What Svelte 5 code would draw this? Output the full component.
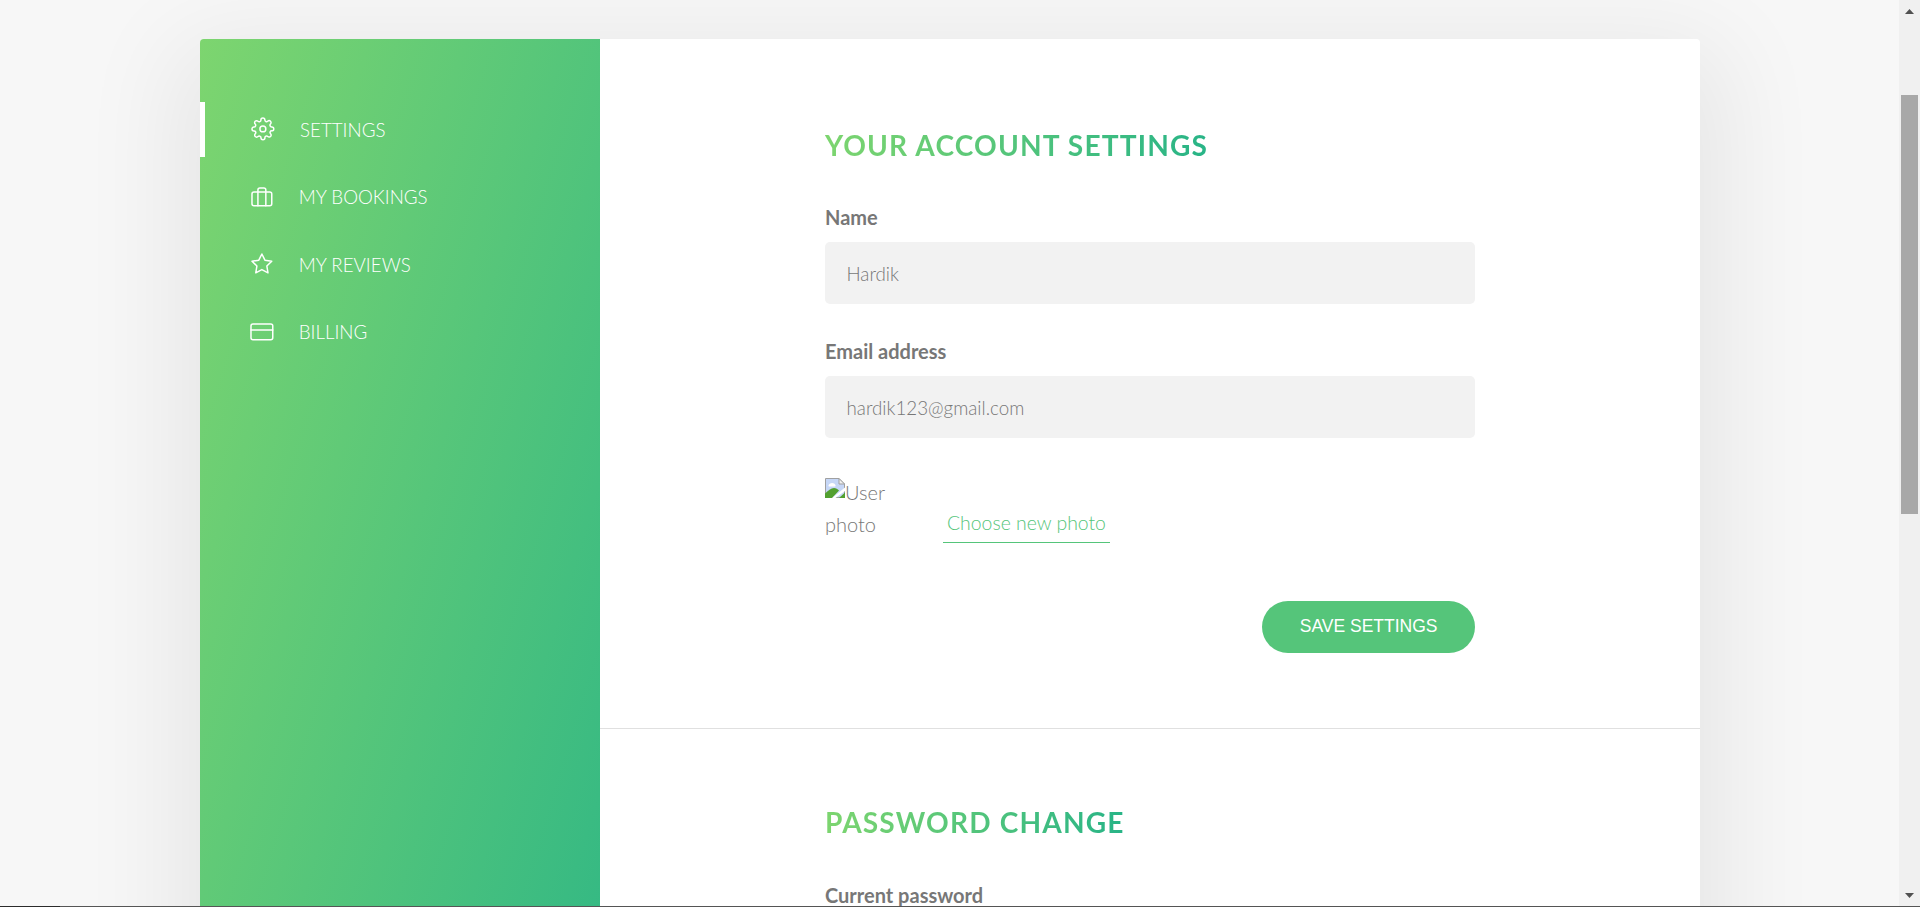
<script>
  const navItems = [
    { label: 'Settings', icon: 'settings', active: true },
    { label: 'My bookings', icon: 'briefcase' },
    { label: 'My reviews', icon: 'star' },
    { label: 'Billing', icon: 'card' },
  ]
</script>

<div class="Page">
  <main class="UserView">
    <nav class="Menu">
      <ul class="SideNav">
        {#each navItems as item}
          <li class:active={item.active}>
            <a href="#nav">
              <svg class="NavIcon" viewBox="0 0 24 24">
                {#if item.icon === 'settings'}
                  <circle cx="12" cy="12" r="3" />
                  <path d="M19.4 15a1.65 1.65 0 0 0 .33 1.82l.06.06a2 2 0 0 1 0 2.83 2 2 0 0 1-2.83 0l-.06-.06a1.65 1.65 0 0 0-1.82-.33 1.65 1.65 0 0 0-1 1.51V21a2 2 0 0 1-2 2 2 2 0 0 1-2-2v-.09A1.65 1.65 0 0 0 9 19.4a1.65 1.65 0 0 0-1.82.33l-.06.06a2 2 0 0 1-2.83 0 2 2 0 0 1 0-2.83l.06-.06a1.65 1.65 0 0 0 .33-1.82 1.65 1.65 0 0 0-1.51-1H3a2 2 0 0 1-2-2 2 2 0 0 1 2-2h.09A1.65 1.65 0 0 0 4.6 9a1.65 1.65 0 0 0-.33-1.82l-.06-.06a2 2 0 0 1 0-2.83 2 2 0 0 1 2.83 0l.06.06a1.65 1.65 0 0 0 1.82.33H9a1.65 1.65 0 0 0 1-1.51V3a2 2 0 0 1 2-2 2 2 0 0 1 2 2v.09a1.65 1.65 0 0 0 1 1.51 1.65 1.65 0 0 0 1.82-.33l.06-.06a2 2 0 0 1 2.83 0 2 2 0 0 1 0 2.83l-.06.06a1.65 1.65 0 0 0-.33 1.82V9a1.65 1.65 0 0 0 1.51 1H21a2 2 0 0 1 2 2 2 2 0 0 1-2 2h-.09a1.65 1.65 0 0 0-1.51 1z" />
                {:else if item.icon === 'briefcase'}
                  <rect x="2" y="7" width="20" height="14" rx="2" ry="2" />
                  <path d="M16 21V5a2 2 0 0 0-2-2h-4a2 2 0 0 0-2 2v16" />
                {:else if item.icon === 'star'}
                  <polygon points="12 2 15.09 8.26 22 9.27 17 14.14 18.18 21.02 12 17.77 5.82 21.02 7 14.14 2 9.27 8.91 8.26 12 2" />
                {:else}
                  <rect x="1" y="4" width="22" height="16" rx="2" ry="2" />
                  <line x1="1" y1="10" x2="23" y2="10" />
                {/if}
              </svg>
              <span>{item.label}</span>
            </a>
          </li>
        {/each}
      </ul>
    </nav>

    <div class="Content">
      <section class="FormContainer">
        <h2 class="Heading">Your account settings</h2>
        <form>
          <div class="Group">
            <label class="Label" for="name">Name</label>
            <input class="Input" id="name" type="text" value="Hardik" />
          </div>
          <div class="Group">
            <label class="Label" for="email">Email address</label>
            <input class="Input" id="email" type="email" value="hardik123@gmail.com" />
          </div>
          <div class="PhotoUpload">
            <div class="Photo">
              <svg class="Broken" viewBox="0 0 20 20">
                <!-- broken image placeholder: page, sky, cloud, hill, torn corner -->
                <path d="M.5 .5h13.500l5.500 5.500v13.500H.5z" fill="#c6d7f7" stroke="#a0a0a0" />
                <path d="M14 .5v5.500h5.500z" fill="#f0f0f0" stroke="#a0a0a0" />
                <path d="M3.500 7.500c.5-3 6-3.500 7-.3 .5 .8-.5 1.300-1 1.300H4.500c-.7 0-1.200-.4-1-1z" fill="#fff" />
                <path d="M0 20v-4.500C3 12.500 6 10 9 10c2 0 3.500 1 5 2.500L7 20z" fill="#53a030" />
                <path d="M20 9.500L7 20h3.500L20 13z" fill="#fff" />
                <path d="M14 20l6-5.500V20z" fill="#53a030" />
              </svg>User photo
            </div>
            <a class="PhotoLink" href="#photo">Choose new photo</a>
          </div>
          <div class="Actions">
            <button class="Save" type="button">Save settings</button>
          </div>
        </form>
      </section>

      <div class="Divider"></div>

      <section class="FormContainer">
        <h2 class="Heading">Password change</h2>
        <div class="Group">
          <label class="Label" for="current">Current password</label>
        </div>
      </section>
    </div>
  </main>

  <div class="Scrollbar">
    <svg class="Arrow up" viewBox="0 0 9 5"><path d="M4.500 0L9 5H0z" /></svg>
    <div class="Thumb"></div>
    <svg class="Arrow down" viewBox="0 0 9 5"><path d="M4.500 5L0 0h9z" /></svg>
  </div>
  <div class="WindowEdge"></div>
</div>

<style>
  :global(body) {
    margin: 0;
    overflow: hidden;
    font-family: Lato, 'Open Sans', sans-serif;
  }

  .Page {
    position: relative;
    height: 907px;
    overflow: hidden;
    background: #f7f7f7;
    padding: 39px 220px 0 200px;
    box-sizing: border-box;
  }

  .UserView {
    display: flex;
    width: 1500px;
    min-height: 1400px;
    background: #fff;
    border-radius: 3.75px;
    overflow: hidden;
    box-shadow: 0 31px 100px 25px rgba(0, 0, 0, 0.07);
  }

  .Menu {
    flex: 0 0 400px;
    padding-top: 62.5px;
    background: linear-gradient(to right bottom, #7dd56f, #28b487);
    background-size: 400px 1300px;
    background-repeat: no-repeat;
  }

  .SideNav {
    list-style: none;
    margin: 0;
    padding: 0;
    display: flex;
    flex-direction: column;
    gap: 12.5px;
  }

  .SideNav li {
    border-left: 5px solid transparent;
  }

  .SideNav li.active {
    border-left-color: #fff;
  }

  .SideNav a {
    display: flex;
    align-items: center;
    padding: 15.625px 45px;
    color: #fff;
    font-size: 18.75px;
    font-weight: 300;
    text-transform: uppercase;
    text-decoration: none;
  }

  .SideNav li.active a {
    padding-left: 46.25px;
  }

  .NavIcon {
    flex: none;
    width: 23.75px;
    height: 23.75px;
    margin-right: 25px;
    fill: none;
    stroke: #fff;
    stroke-width: 1.5;
    stroke-linecap: round;
    stroke-linejoin: round;
  }

  .Content {
    flex: 1;
    padding-top: 87.5px;
    min-width: 0;
  }

  .FormContainer {
    width: 650px;
    margin: 0 auto;
  }

  .Heading {
    margin: 0 0 42px;
    font-size: 28.125px;
    font-weight: 700;
    line-height: 1.3;
    letter-spacing: 1.15px;
    text-transform: uppercase;
    display: inline-block;
    background: linear-gradient(to right, #7dd56f, #28b487);
    -webkit-background-clip: text;
    background-clip: text;
    color: transparent;
  }

  .Group {
    margin-bottom: 35px;
  }

  .Label {
    display: block;
    margin-bottom: 12px;
    font-size: 20px;
    font-weight: 700;
    line-height: 25px;
    color: #777;
  }

  .Input {
    display: block;
    width: 100%;
    height: 62px;
    box-sizing: border-box;
    padding: 0 21.5px;
    border: 0;
    border-radius: 5px;
    background: #f2f2f2;
    font-family: inherit;
    font-size: 18.75px;
    font-weight: 300;
    color: #777;
  }

  .PhotoUpload {
    display: flex;
    align-items: center;
    margin-top: 37.6px;
    font-size: 20px;
    font-weight: 300;
    color: #777;
  }

  .Photo {
    width: 93.75px;
    height: 93.75px;
    margin-right: 24.5px;
    line-height: 32.3px;
  }

  .Broken {
    width: 20px;
    height: 20px;
    vertical-align: 1.5px;
  }

  .PhotoLink {
    margin-top: 8px;
    color: #55c57a;
    font-size: 19.4px;
    padding: 0 3.75px 8px;
    border-bottom: 1.25px solid #55c57a;
    text-decoration: none;
  }

  .Actions {
    display: flex;
    justify-content: flex-end;
    margin-top: 31.6px;
  }

  .Save {
    padding: 14.6px 37.5px 16px;
    border: 0;
    border-radius: 125px;
    background: #55c57a;
    color: #fff;
    font-family: 'Liberation Sans', Arial, sans-serif;
    font-size: 17.5px;
    text-transform: uppercase;
  }

  .Divider {
    height: 1px;
    margin: 75.5px 0 75.2px;
    background: #e0e0e0;
  }

  .Scrollbar {
    position: absolute;
    top: 0;
    right: 0;
    bottom: 0;
    width: 21px;
    background: #f0f0f0;
  }

  .Thumb {
    position: absolute;
    top: 95px;
    left: 2px;
    width: 17px;
    height: 419px;
    background: #a8a8a8;
  }

  .Arrow {
    position: absolute;
    left: 6px;
    width: 9px;
    height: 5px;
    fill: #505050;
  }

  .Arrow.up {
    top: 9px;
  }

  .Arrow.down {
    bottom: 9px;
  }

  .WindowEdge {
    position: absolute;
    left: 0;
    right: 0;
    bottom: 0;
    height: 1.5px;
    background: linear-gradient(to right, #2b2b2b 60px, #555 60px);
  }
</style>
